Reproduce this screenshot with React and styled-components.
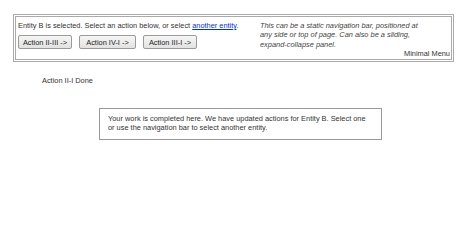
import React from "react";
import styled, { createGlobalStyle } from "styled-components";

const Global = createGlobalStyle`
  html, body { margin: 0; padding: 0; background: #fff; }
  body {
    font-family: "Liberation Sans", Arial, sans-serif;
    font-size: 7.4px;
    line-height: 9.3px;
    color: #333;
  }
`;

const Page = styled.div`
  padding: 14px 0 0 13px;
`;

const Nav = styled.div`
  box-sizing: border-box;
  width: 441px;
  border: 3px double #aaa;
  padding: 4px 1px 0 2px;
  display: flex;
  flex-direction: column;
`;

const NavRow = styled.div`
  display: grid;
  grid-template-columns: 242px 164px;
`;

const Info = styled.div`
  display: flex;
  flex-direction: column;
  gap: 5px;
`;

const Link = styled.a`
  color: #0033cc;
  text-decoration: underline;
`;

const ButtonRow = styled.div`
  display: flex;
  gap: 7px;
`;

const ActionButton = styled.button`
  box-sizing: border-box;
  height: 14px;
  width: ${(p) => p.$w}px;
  padding: 0;
  font-family: inherit;
  font-size: 7.4px;
  color: #222;
  background: linear-gradient(#f6f6f6, #e2e2e2);
  border: 1px solid #9a9a9a;
  border-radius: 2px;
`;

const Note = styled.div`
  font-style: italic;
  color: #444;
`;

const Footer = styled.div`
  text-align: right;
  color: #333;
`;

const Status = styled.div`
  margin: 14px 0 0 29px;
`;

const Result = styled.div`
  box-sizing: border-box;
  width: 283px;
  height: 32px;
  margin: 23px 0 0 86px;
  border: 1px solid #999;
  padding: 5px 8px;
`;

export default function App() {
  return (
    <>
      <Global />
      <Page>
        <Nav>
          <NavRow>
            <Info>
              <div>
                Entity B is selected. Select an action below, or select{" "}
                <Link href="#">another entity</Link>.
              </div>
              <ButtonRow>
                <ActionButton $w={54}>Action II-III -&gt;</ActionButton>
                <ActionButton $w={57}>Action IV-I -&gt;</ActionButton>
                <ActionButton $w={54}>Action III-I -&gt;</ActionButton>
              </ButtonRow>
            </Info>
            <Note>
              This can be a static navigation bar, positioned at any side or
              top of page. Can also be a sliding, expand-collapse panel.
            </Note>
          </NavRow>
          <Footer>Minimal Menu</Footer>
        </Nav>
        <Status>Action II-I Done</Status>
        <Result>
          Your work is completed here. We have updated actions for Entity B.
          Select one or use the navigation bar to select another entity.
        </Result>
      </Page>
    </>
  );
}
